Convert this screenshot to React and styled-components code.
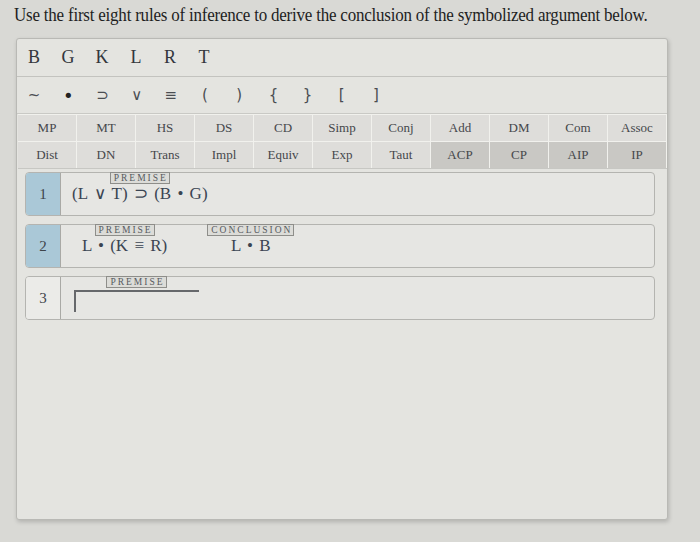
import React from 'react';
import styled, { createGlobalStyle } from 'styled-components';

const GlobalStyle = createGlobalStyle`
  html, body {
    margin: 0;
    padding: 0;
    background: #d9d9d5;
  }
  body {
    width: 700px;
    height: 542px;
    overflow: hidden;
    font-family: "Liberation Serif", "Times New Roman", serif;
  }
`;

const letters = ['B', 'G', 'K', 'L', 'R', 'T'];
const symbols = ['~', '•', '⊃', '∨', '≡', '(', ')', '{', '}', '[', ']'];
const rulesTop = ['MP', 'MT', 'HS', 'DS', 'CD', 'Simp', 'Conj', 'Add', 'DM', 'Com', 'Assoc'];
const rulesBottom = ['Dist', 'DN', 'Trans', 'Impl', 'Equiv', 'Exp', 'Taut', 'ACP', 'CP', 'AIP', 'IP'];
const darkRules = ['ACP', 'CP', 'AIP', 'IP'];

const App = () => (
  <Page>
    <GlobalStyle />
    <Title>Use the first eight rules of inference to derive the conclusion of the symbolized argument below.</Title>
    <Panel>
      <LetterBar>
        {letters.map((l) => (
          <Letter key={l}>{l}</Letter>
        ))}
      </LetterBar>
      <SymbolBar>
        {symbols.map((s) => (
          <Symbol key={s} dot={s === '•'}>{s}</Symbol>
        ))}
      </SymbolBar>
      <RuleGrid>
        {rulesTop.map((r) => (
          <RuleCell key={r}>{r}</RuleCell>
        ))}
        {rulesBottom.map((r) => (
          <RuleCell key={r} dark={darkRules.includes(r)}>{r}</RuleCell>
        ))}
      </RuleGrid>
      <Lines>
        <LineRow>
          <LineNumber active>1</LineNumber>
          <LineBody>
            <Block offset={11}>
              <Tag>Premise</Tag>
              <Formula>(L ∨ T) ⊃ (B • G)</Formula>
            </Block>
          </LineBody>
        </LineRow>
        <LineRow>
          <LineNumber active>2</LineNumber>
          <LineBody>
            <Block offset={21}>
              <Tag>Premise</Tag>
              <Formula>L • (K ≡ R)</Formula>
            </Block>
            <Block offset={40}>
              <Tag>Conclusion</Tag>
              <Formula>L • B</Formula>
            </Block>
          </LineBody>
        </LineRow>
        <LineRow>
          <LineNumber>3</LineNumber>
          <LineBody>
            <Block offset={13}>
              <Tag>Premise</Tag>
              <Entry />
            </Block>
          </LineBody>
        </LineRow>
      </Lines>
    </Panel>
  </Page>
);

const Page = styled.div`
  padding: 4px 0 0 14px;
`;

const Title = styled.div`
  font-size: 17px;
  line-height: 20px;
  color: #1e1e1e;
  letter-spacing: -0.22px;
  transform: scaleY(1.1);
  transform-origin: left top;
  white-space: nowrap;
`;

const Panel = styled.div`
  margin: 14px 0 0 2px;
  width: 652px;
  height: 482px;
  box-sizing: border-box;
  background: #e4e4e0;
  border: 1px solid #b9b9b5;
  border-radius: 3px;
  box-shadow: 1px 2px 4px rgba(0, 0, 0, 0.18);
`;

const LetterBar = styled.div`
  display: flex;
  height: 37px;
  align-items: center;
  border-bottom: 1px solid #c3c3bf;
`;

const Letter = styled.div`
  width: 34px;
  text-align: center;
  font-size: 18px;
  color: #33363c;
`;

const SymbolBar = styled.div`
  display: flex;
  height: 36px;
  align-items: center;
  border-bottom: 1px solid #c9c9c5;
`;

const Symbol = styled.div`
  width: 34.2px;
  text-align: center;
  font-family: "DejaVu Sans", "Liberation Sans", sans-serif;
  font-size: ${(p) => (p.dot ? '18px' : '15px')};
  color: ${(p) => (p.dot ? '#222' : '#4a4d52')};
`;

const RuleGrid = styled.div`
  display: grid;
  grid-template-columns: repeat(11, 59px);
  grid-auto-rows: 27px;
  margin-left: 1px;
  border-bottom: 1px solid #c7c7c3;
`;

const RuleCell = styled.div`
  display: flex;
  align-items: center;
  justify-content: center;
  background: ${(p) => (p.dark ? '#c9c8c4' : '#dedddA')};
  border-right: 1px solid #f1f1ed;
  border-top: 1px solid #f1f1ed;
  font-size: 13px;
  color: #45474b;
`;

const Lines = styled.div`
  display: flex;
  flex-direction: column;
  gap: 8px;
  padding: 3px 0 0 8px;
  width: 630px;
`;

const LineRow = styled.div`
  display: flex;
  height: 44px;
  box-sizing: border-box;
  background: #e6e6e3;
  border: 1px solid #b4b4b0;
  border-radius: 4px;
`;

const LineNumber = styled.div`
  width: 34px;
  flex-shrink: 0;
  display: flex;
  align-items: center;
  justify-content: center;
  background: ${(p) => (p.active ? '#aac8d7' : '#ebebe8')};
  border-right: 1px solid #a9a9a5;
  border-radius: 3px 0 0 3px;
  font-size: 15px;
  color: #3e444a;
`;

const LineBody = styled.div`
  display: flex;
  align-items: flex-start;
`;

const Block = styled.div`
  display: flex;
  flex-direction: column;
  align-items: center;
  margin-left: ${(p) => p.offset}px;
  margin-top: -1px;
`;

const Tag = styled.div`
  font-size: 9.5px;
  line-height: 10px;
  text-transform: uppercase;
  letter-spacing: 2px;
  padding: 0 1px 0 3px;
  color: #565a60;
  background: #dcdcd8;
  border: 1px solid #8e8e8a;
`;

const Formula = styled.div`
  font-size: 17px;
  line-height: 19px;
  color: #3a4452;
  white-space: nowrap;
  word-spacing: 2px;
`;

const Entry = styled.div`
  margin-top: 2px;
  width: 125px;
  height: 22px;
  box-sizing: border-box;
  border-top: 2px solid #66686b;
  border-left: 2px solid #66686b;
`;

export default App;
